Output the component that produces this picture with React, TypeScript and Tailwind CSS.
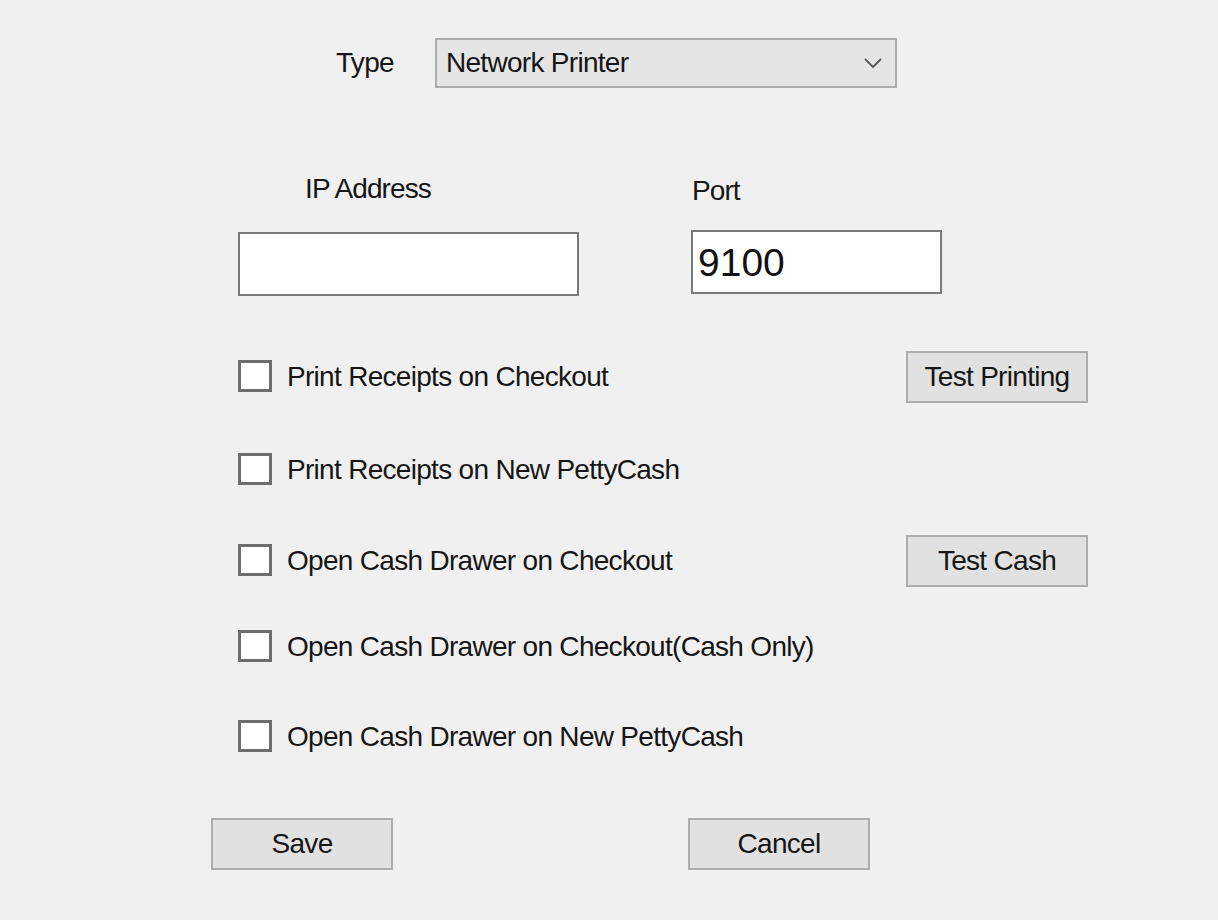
import React from "react";

const font = { fontFamily: '"Liberation Sans", Arial, sans-serif' };

function CheckRow({ label, button }: { label: string; button?: string }) {
  return (
    <div className="flex h-[52px] w-[850px] items-center justify-between">
      <label className="flex items-center">
        <span className="-mt-[3px] box-border h-[32px] w-[34px] border-[3px] border-[#6d6d6d] bg-white" />
        <span className="ml-[15px] text-[28px] leading-none tracking-[-0.7px] text-[#161616]">{label}</span>
      </label>
      {button && <WinButton label={button} />}
    </div>
  );
}

function WinButton({ label, className = "" }: { label: string; className?: string }) {
  return (
    <button
      className={
        "box-border flex h-[52px] w-[182px] items-center justify-center border-2 border-[#adadad] bg-[#e1e1e1] text-[28px] leading-none tracking-[-0.7px] text-[#161616] " +
        className
      }
    >
      {label}
    </button>
  );
}

export default function App() {
  return (
    <div className="min-h-screen w-full bg-[#f0f0f0] pt-[38px]" style={font}>
      {/* Type */}
      <div className="flex h-[50px] items-center">
        <span className="ml-[336px] text-[28px] leading-none tracking-[-0.7px] text-[#161616]">Type</span>
        <div className="ml-[41px] box-border flex h-[50px] w-[462px] items-center justify-between border-2 border-[#adadad] bg-[#e5e5e5] pl-[9px] pr-[12px]">
          <span className="text-[28px] leading-none tracking-[-0.7px] text-[#161616]">Network Printer</span>
          <svg width="20" height="12" viewBox="0 0 20 12" fill="none">
            <path d="M2 2l8 8 8-8" stroke="#555" strokeWidth="1.8" />
          </svg>
        </div>
      </div>

      {/* labels */}
      <div className="mt-[86px] flex h-[30px] items-center text-[28px] leading-none tracking-[-0.9px] text-[#161616]">
        <span className="ml-[305px] w-[387px]">IP Address</span>
        <span className="mt-[4px]">Port</span>
      </div>

      {/* inputs */}
      <div className="mt-[26px] flex items-start">
        <div className="ml-[238px] mt-[2px] box-border h-[64px] w-[341px] border-2 border-[#7a7a7a] bg-white" />
        <div className="ml-[112px] box-border flex h-[64px] w-[251px] items-center border-2 border-[#7a7a7a] bg-white pl-[5px]">
          <span className="text-[39px] leading-none text-[#111]">9100</span>
        </div>
      </div>

      {/* checkboxes */}
      <div className="ml-[238px] mt-[55px] flex flex-col">
        <CheckRow label="Print Receipts on Checkout" button="Test Printing" />
        <div className="mt-[41px]">
          <CheckRow label="Print Receipts on New PettyCash" />
        </div>
        <div className="mt-[39px]">
          <CheckRow label="Open Cash Drawer on Checkout" button="Test Cash" />
        </div>
        <div className="mt-[34px]">
          <CheckRow label="Open Cash Drawer on Checkout(Cash Only)" />
        </div>
        <div className="mt-[38px]">
          <CheckRow label="Open Cash Drawer on New PettyCash" />
        </div>
      </div>

      {/* actions */}
      <div className="mt-[55px] flex">
        <WinButton label="Save" className="ml-[211px]" />
        <WinButton label="Cancel" className="ml-[295px]" />
      </div>
    </div>
  );
}
